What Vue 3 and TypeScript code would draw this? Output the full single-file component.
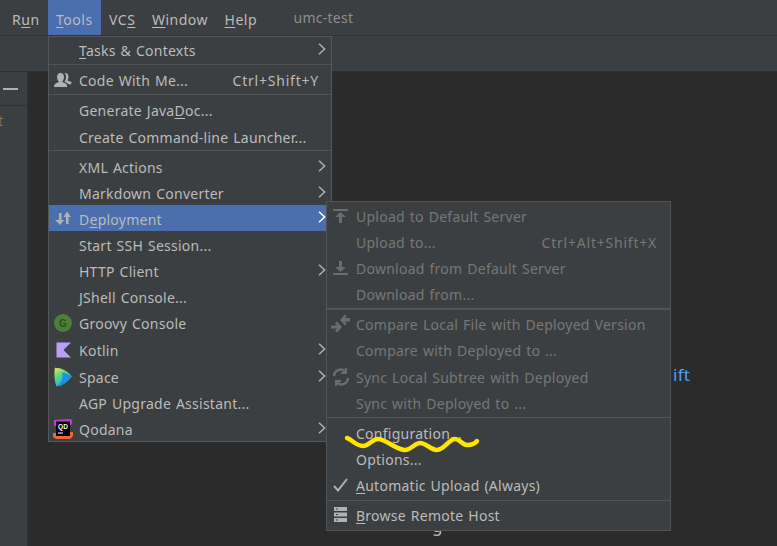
<script setup lang="ts">
interface Item {
  a?: string; m?: string; b?: string; sep?: boolean; icon?: string; key?: string; sub?: boolean; hi?: boolean; off?: boolean; cls?: string;
}
const top: { a: string; m: string; b: string; on?: boolean }[] = [
  { a: 'R', m: 'u', b: 'n' },
  { a: '', m: 'T', b: 'ools', on: true },
  { a: 'VC', m: 'S', b: '' },
  { a: '', m: 'W', b: 'indow' },
  { a: '', m: 'H', b: 'elp' },
];
const tools: Item[] = [
  { m: 'T', b: 'asks & Contexts', sub: true },
  { sep: true },
  { a: 'Code With Me...', icon: 'people', key: 'Ctrl+Shift+Y' },
  { sep: true },
  { a: 'Generate Java', m: 'D', b: 'oc...' },
  { a: 'Create Command-line Launcher...', cls: 'gap' },
  { sep: true, cls: 'tight' },
  { a: 'XML Actions', sub: true },
  { a: 'Markdown Converter', sub: true },
  { a: 'D', m: 'e', b: 'ployment', icon: 'deploy', sub: true, hi: true },
  { a: 'Start SSH Session...' },
  { a: 'HTTP Client', sub: true },
  { a: 'JShell Console...' },
  { a: 'Groovy Console', icon: 'groovy' },
  { a: 'Kotlin', icon: 'kotlin', sub: true, cls: 'gap' },
  { a: 'Space', icon: 'space', sub: true, cls: 'gap' },
  { a: 'AGP Upgrade Assistant...' },
  { a: 'Qodana', icon: 'qodana', sub: true },
];
const deploy: Item[] = [
  { a: 'Upload to Default Server', icon: 'upload', off: true },
  { a: 'Upload to...', key: 'Ctrl+Alt+Shift+X', off: true },
  { a: 'Download from Default Server', icon: 'download', off: true },
  { a: 'Download from...', off: true },
  { sep: true, cls: 'thick' },
  { a: 'Compare Local File with Deployed Version', icon: 'compare', off: true },
  { a: 'Compare with Deployed to ...', off: true },
  { a: 'Sync Local Subtree with Deployed', icon: 'sync', off: true, cls: 'gap' },
  { a: 'Sync with Deployed to ...', off: true },
  { sep: true },
  { a: 'Configuration...' },
  { a: 'Options...' },
  { m: 'A', b: 'utomatic Upload (Always)', icon: 'check' },
  { sep: true, cls: 'low' },
  { m: 'B', b: 'rowse Remote Host', icon: 'server' },
];
</script>

<template>
  <div class="ide">
    <header class="menubar">
      <span v-for="t in top" :key="t.a + t.m + t.b" class="top" :class="{ on: t.on }">{{ t.a }}<u>{{ t.m }}</u>{{ t.b }}</span>
      <span class="project">umc-test</span>
    </header>
    <div class="toolbar"></div>
    <main class="body">
      <aside class="side">
        <div class="side-head"><i class="minus"></i></div>
        <div class="side-text">t</div>
      </aside>
      <section class="editor">
        <p class="ghost shift">ift</p>
        <p class="ghost gee">g</p>
      </section>
    </main>

    <div class="menu tools">
      <template v-for="(it, i) in tools" :key="i">
        <div v-if="it.sep" class="sep" :class="it.cls"></div>
        <div v-else class="row" :class="[it.cls, { hi: it.hi }]">
          <span class="slot">
            <svg v-if="it.icon" width="20" height="20" viewBox="0 0 20 20">
              <g v-if="it.icon === 'people'" fill="#afb1b3">
                <path d="M1 17c0-3 2-4 5-5-1-1-2-3-2-5 0-2 1-4 3.500-4S11 5 11 7c0 2-1 4-2 5 2 .6 4 1.400 5 3v2z" />
                <path d="M11.500 3c2-.5 4 1 4 3.500 0 1.500-.5 3-1 4l4 1.500-.5 2.500-3-.5c-1-1-2-1.600-3.500-2 1-1.500 1.500-3 1.500-5 0-1.500-.5-3-1.500-4z" />
              </g>
              <g v-else-if="it.icon === 'deploy'" fill="#afb1b3">
                <path d="M6 6h2.500v7H11l-3.750 5L2 13h4z" transform="translate(0 -2)" />
                <path d="M12 8V15h2.500V8H17l-4-5.500L9.500 8z" transform="translate(1 0)" />
              </g>
              <g v-else-if="it.icon === 'groovy'">
                <circle cx="10" cy="10" r="9" fill="#4d7f3a" />
                <text x="10" y="13.500" text-anchor="middle" font-size="10" font-weight="700" font-family="Liberation Sans, sans-serif" fill="#2d4d22">G</text>
              </g>
              <path v-else-if="it.icon === 'kotlin'" d="M3.500 2.500H18L10.500 10 18 17.500H3.500z" fill="#b9a0f6" />
              <g v-else-if="it.icon === 'space'">
                <defs>
                  <linearGradient id="sp" x1="0" y1="0" x2="0.6" y2="1">
                    <stop offset="0" stop-color="#f2e64a" />
                    <stop offset=".45" stop-color="#4fd68a" />
                    <stop offset="1" stop-color="#1fb6d8" />
                  </linearGradient>
                </defs>
                <path d="M2 .8C8 .8 15 4 18.800 9.500 15 14.500 9 19.200 3.500 19.200 1.500 15 .8 6 2 .8z" fill="url(#sp)" />
                <path d="M9 5.500C13 6 17 8 18.800 9.500 15 14.500 9 19.200 3.500 19.200 8 16 11 11 9 5.500z" fill="#1c8fe8" />
              </g>
              <g v-else-if="it.icon === 'qodana'">
                <path d="M1 1 18 0l1.500 2.500L18 6 1 7z" fill="#b93fd6" />
                <path d="M0 14l20-1v4l-3 3H3l-3-2z" fill="#f2643a" />
                <rect x="3" y="2.500" width="14" height="14.500" fill="#000" />
                <text x="10" y="9.500" text-anchor="middle" font-size="6.500" font-weight="700" font-family="Liberation Sans, sans-serif" fill="#fff">QD</text>
                <rect x="5" y="13.500" width="5" height="1" fill="#fff" />
              </g>
            </svg>
          </span>
          <span class="label">{{ it.a }}<u v-if="it.m">{{ it.m }}</u>{{ it.b }}</span>
          <span v-if="it.key" class="key">{{ it.key }}</span>
          <svg v-if="it.sub" class="chev" width="8" height="12" viewBox="0 0 8 12"><path d="M1 .8 6.600 6 1 11.200" fill="none" :stroke="it.hi ? '#fff' : '#afb1b3'" stroke-width="1.500" /></svg>
        </div>
      </template>
    </div>

    <div class="menu deploy">
      <template v-for="(it, i) in deploy" :key="i">
        <div v-if="it.sep" class="sep" :class="it.cls"></div>
        <div v-else class="row" :class="[it.cls, { off: it.off }]">
          <span class="slot">
            <svg v-if="it.icon" width="20" height="20" viewBox="0 0 20 20">
              <g v-if="it.icon === 'upload'" fill="#6a6c6e">
                <rect x="2" y="3" width="15" height="2" />
                <path d="M8 17V11H4l5.500-5L15 11h-4v6z" />
              </g>
              <g v-else-if="it.icon === 'download'" fill="#6a6c6e">
                <rect x="2" y="15" width="15" height="2" />
                <path d="M8 3v6H4l5.500 5L15 9h-4V3z" />
              </g>
              <g v-else-if="it.icon === 'compare'" fill="#6a6c6e">
                <path d="M0 11.500h6l-2-2.500 2-1.500 5 5.500-5 5.500-2-1.500 2-2.500H0z" />
                <path d="M19 5h-5l1.500-2L14 1.500 9 7l5 5.500 1.500-1.500-1.500-2.500h5z" transform="translate(0 -1)" />
              </g>
              <g v-else-if="it.icon === 'sync'" fill="none" stroke="#6a6c6e" stroke-width="2.500">
                <path d="M3 9a6.500 6.500 0 0 1 11-4.500" />
                <path d="M17 11a6.500 6.500 0 0 1-11 4.500" />
                <path d="M15 1v5h-5" stroke-width="2" />
                <path d="M5 19v-5h5" stroke-width="2" />
              </g>
              <path v-else-if="it.icon === 'check'" d="M3 11l4 4.500L16 4" fill="none" stroke="#afb1b3" stroke-width="2" />
              <g v-else-if="it.icon === 'server'" fill="#afb1b3">
                <rect x="3" y="2" width="13" height="4" />
                <rect x="3" y="7.500" width="13" height="4" />
                <rect x="3" y="13" width="13" height="4" />
                <rect x="5" y="3.500" width="2" height="1" fill="#3c3f41" />
                <rect x="5" y="9" width="2" height="1" fill="#3c3f41" />
                <rect x="5" y="14.500" width="2" height="1" fill="#3c3f41" />
              </g>
            </svg>
          </span>
          <span class="label">{{ it.a }}<u v-if="it.m">{{ it.m }}</u>{{ it.b }}</span>
          <span v-if="it.key" class="key">{{ it.key }}</span>
        </div>
      </template>
    </div>

    <svg class="squiggle" width="150" height="30" viewBox="0 0 150 30">
      <path d="M7 10C11 11 16 18 23 18 29 18 32 11 38 11 46 11 56 22 65 22 71 22 75 15 80 15 86 15 91 22 97 22 104 22 109 11 115 11 120 11 122 17 127 17 131 17 135 16 137 13" fill="none" stroke="#ffe600" stroke-width="4.500" stroke-linecap="round" stroke-linejoin="round" />
    </svg>
  </div>
</template>

<style>
html, body { margin: 0; background: #2b2b2b; }
</style>

<style scoped>
.ide {
  position: relative;
  width: 777px;
  height: 546px;
  overflow: hidden;
  display: flex;
  flex-direction: column;
  background: #2b2b2b;
  font: 14px "Noto Sans", "Open Sans", sans-serif;
  letter-spacing: .25px;
  word-spacing: 1px;
  color: #bbbbbb;
}
u { text-underline-offset: 2px; text-decoration-thickness: 1px; }
.menubar {
  height: 35px;
  display: flex;
  align-items: center;
  background: #3c3f41;
  border-bottom: 1px solid #323232;
  padding-left: 4px;
  flex: none;
}
.top { padding: 0 8.5px 0 8px; height: 35px; line-height: 39px; letter-spacing: .5px; }
.top.on { background: #4b6eaf; }
.project { margin-left: 28px; color: #8c8e90; line-height: 39px; }
.toolbar {
  height: 35px;
  flex: none;
  background: #3c3f41;
  border-bottom: 1px solid #2f2f2f;
}
.body { flex: 1; display: flex; min-height: 0; }
.side {
  width: 27px;
  flex: none;
  background: #3c3f41;
  border-right: 1px solid #323232;
}
.side-head {
  height: 33px;
  border-bottom: 1px solid #323232;
  display: flex;
  align-items: center;
  padding-left: 3px;
}
.minus { width: 15px; height: 2px; background: #afb1b3; }
.side-text { margin: 5px 0 0 -2px; color: #7d7466; }
.editor { flex: 1; position: relative; }
.ghost { margin: 0; color: #589df6; }
.shift { padding: 291px 0 0 645px; font-size: 17px; }
.gee { padding: 128px 0 0 404px; color: #bbbbbb; font-size: 17px; }
.menu {
  position: absolute;
  box-sizing: border-box;
  background: #3c3f41;
  border: 1px solid #555759;
}
.tools { left: 48px; top: 36px; width: 284px; height: 406px; }
.deploy { left: 326px; top: 201px; width: 345px; height: 330px; padding-top: 1px; border-color: #515355; z-index: 2; }
.row { height: 26px; display: flex; align-items: center; white-space: nowrap; }
.row.gap { margin-top: 1px; }
.slot { width: 30px; flex: none; display: flex; padding-left: 4px; box-sizing: border-box; }
.deploy .slot { width: 29px; }
.label { flex: 1; }
.key { padding-right: 12px; letter-spacing: .78px; }
.deploy .key { padding-right: 13px; }
.chev { margin-right: 5px; margin-top: -3px; }
.hi { background: #4b6eaf; margin: -1px 0 1px; }
.hi .label, .hi .slot { position: relative; top: 1px; }
.off { color: #777777; }
.sep { height: 1px; margin: 1px 0 2px; background: #515355; }
.sep.thick { height: 2px; margin-bottom: 1px; }
.sep.tight { margin: 0 0 3px; }
.sep.low { margin: 2px 0 1px; }
.squiggle { position: absolute; left: 340px; top: 428px; z-index: 3; }
</style>
